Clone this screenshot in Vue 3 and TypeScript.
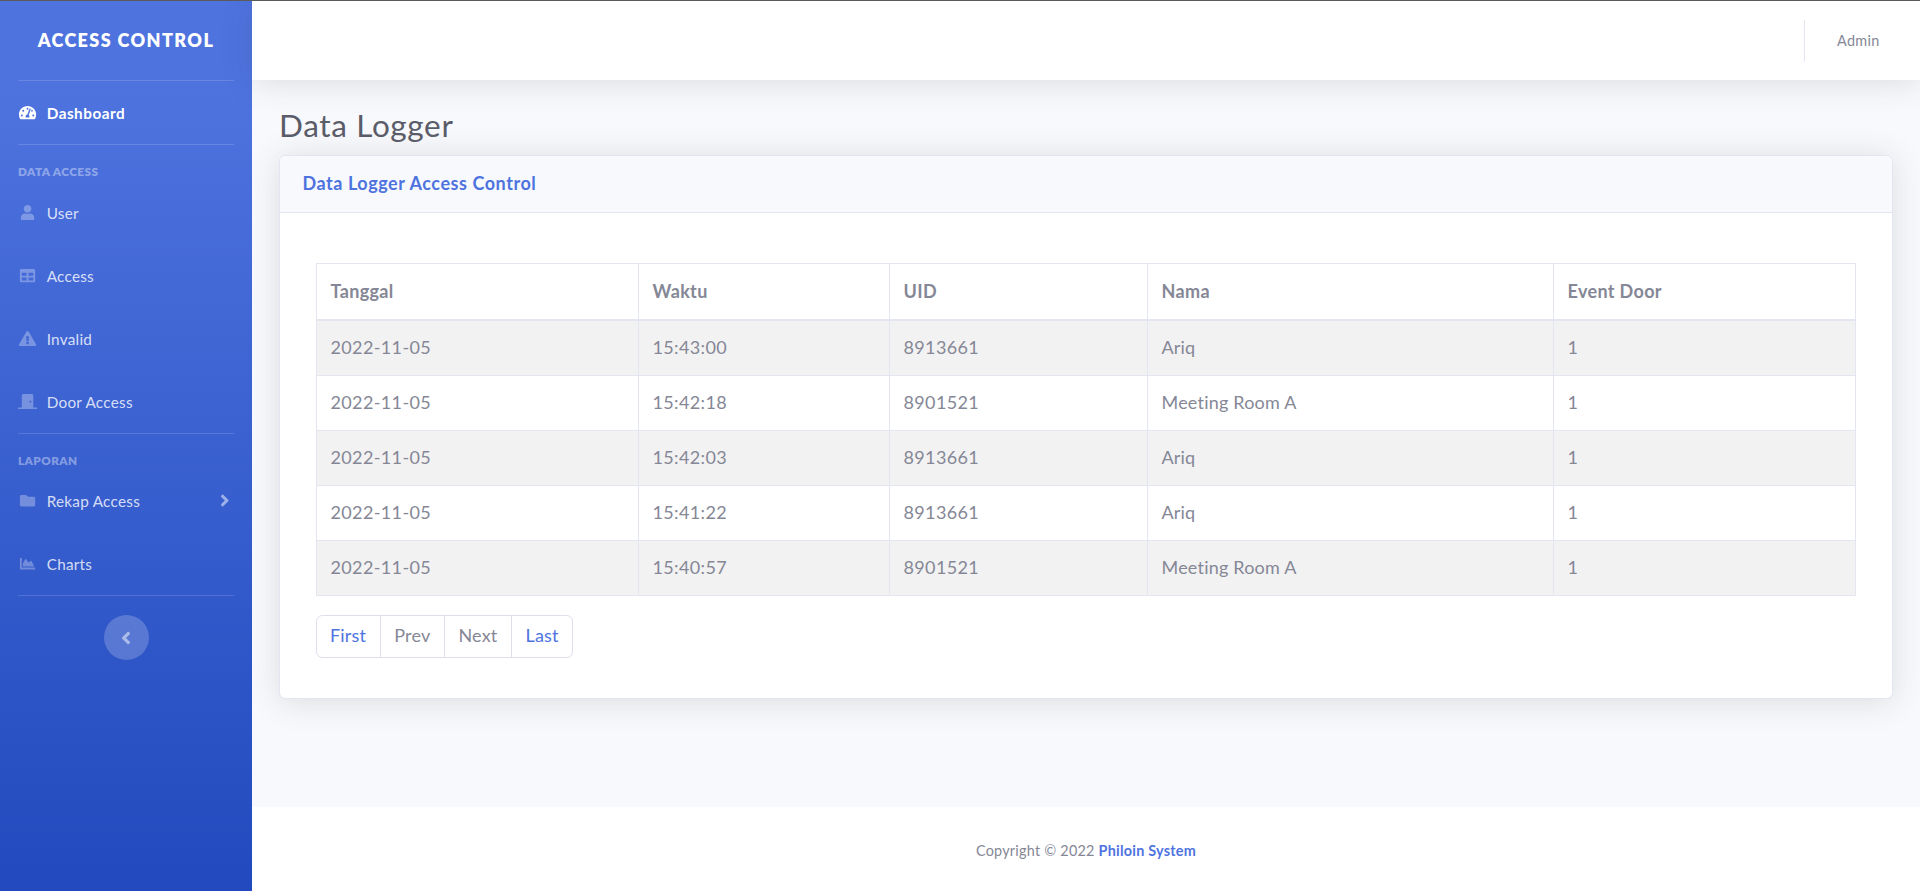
<script setup lang="ts">
interface NavItem {
  label: string;
  icon: keyof typeof icons;
  active?: boolean;
  arrow?: boolean;
}

const icons = {
  gauge: {
    box: '0 0 576 512',
    d: 'M288 32C128.94 32 0 160.94 0 320c0 52.8 14.25 102.26 39.06 144.8 5.61 9.62 16.3 15.2 27.44 15.2h443c11.14 0 21.83-5.58 27.44-15.2C561.75 422.26 576 372.8 576 320c0-159.06-128.94-288-288-288zm0 64c14.71 0 26.58 10.13 30.32 23.65-1.11 2.26-2.64 4.23-3.45 6.67l-9.22 27.67c-5.13 3.49-10.97 6.01-17.64 6.01-17.67 0-32-14.33-32-32S270.33 96 288 96zM96 384c-17.67 0-32-14.33-32-32s14.33-32 32-32 32 14.33 32 32-14.33 32-32 32zm48-160c-17.67 0-32-14.33-32-32s14.33-32 32-32 32 14.33 32 32-14.33 32-32 32zm246.77-72.41l-61.33 184C343.13 347.33 352 364.54 352 384c0 11.72-3.38 22.55-8.88 32H232.88c-5.5-9.45-8.88-20.28-8.88-32 0-33.94 26.5-61.43 59.9-63.59l61.34-184.01c4.17-12.56 17.73-19.45 30.36-15.17 12.57 4.19 19.35 17.79 15.17 30.36zm14.66 57.2l15.52-46.55c3.47-1.29 7.13-2.23 11.05-2.23 17.67 0 32 14.33 32 32s-14.33 32-32 32c-11.38-.01-20.89-6.28-26.57-15.22zM480 384c-17.67 0-32-14.33-32-32s14.33-32 32-32 32 14.33 32 32-14.33 32-32 32z',
  },
  user: {
    box: '0 0 448 512',
    d: 'M224 256c70.7 0 128-57.3 128-128S294.7 0 224 0 96 57.3 96 128s57.3 128 128 128zm89.6 32h-16.7c-22.2 10.2-46.9 16-72.9 16s-50.6-5.8-72.9-16h-16.7C60.2 288 0 348.2 0 422.4V464c0 26.5 21.5 48 48 48h352c26.5 0 48-21.5 48-48v-41.6c0-74.2-60.2-134.4-134.4-134.4z',
  },
  table: {
    box: '0 0 512 512',
    d: 'M464 32H48C21.49 32 0 53.49 0 80v352c0 26.51 21.49 48 48 48h416c26.51 0 48-21.49 48-48V80c0-26.51-21.49-48-48-48zM224 416H64v-96h160v96zm0-160H64v-96h160v96zm224 160H288v-96h160v96zm0-160H288v-96h160v96z',
  },
  warning: {
    box: '0 0 576 512',
    d: 'M569.517 440.013C587.975 472.007 564.806 512 527.94 512H48.054c-36.937 0-59.999-40.055-41.577-71.987L246.423 24.035c18.467-32.009 64.72-31.951 83.154 0l239.94 415.978zM288 354c-25.405 0-46 20.595-46 46s20.595 46 46 46 46-20.595 46-46-20.595-46-46-46zm-43.673-165.346l7.418 136c.347 6.364 5.609 11.346 11.982 11.346h48.546c6.373 0 11.635-4.982 11.982-11.346l7.418-136c.375-6.874-5.098-12.654-11.982-12.654h-63.383c-6.884 0-12.356 5.78-11.981 12.654z',
  },
  door: {
    box: '0 0 640 512',
    d: 'M624 448H512V50.8C512 22.78 490.47 0 464 0H175.99c-26.47 0-48 22.78-48 50.8V448H16c-8.84 0-16 7.16-16 16v32c0 8.84 7.16 16 16 16h608c8.84 0 16-7.16 16-16v-32c0-8.84-7.16-16-16-16zM415.99 288c-17.67 0-32-14.33-32-32s14.33-32 32-32 32 14.33 32 32c.01 17.67-14.32 32-32 32z',
  },
  folder: {
    box: '0 0 512 512',
    d: 'M464 128H272l-64-64H48C21.49 64 0 85.49 0 112v288c0 26.51 21.49 48 48 48h416c26.51 0 48-21.49 48-48V176c0-26.51-21.49-48-48-48z',
  },
  chart: {
    box: '0 0 512 512',
    d: 'M500 384c6.6 0 12 5.4 12 12v40c0 6.6-5.4 12-12 12H12c-6.6 0-12-5.4-12-12V76c0-6.6 5.4-12 12-12h40c6.6 0 12 5.4 12 12v308h436zM372.7 159.5L288 216l-85.3-113.7c-5.1-6.8-15.5-6.3-19.9 1L96 248v104h384l-89.9-187.8c-3.2-6.5-11.4-8.7-17.4-4.7z',
  },
};

const dataNav: NavItem[] = [
  { label: 'User', icon: 'user' },
  { label: 'Access', icon: 'table' },
  { label: 'Invalid', icon: 'warning' },
  { label: 'Door Access', icon: 'door' },
];

const reportNav: NavItem[] = [
  { label: 'Rekap Access', icon: 'folder', arrow: true },
  { label: 'Charts', icon: 'chart' },
];

const columns = ['Tanggal', 'Waktu', 'UID', 'Nama', 'Event Door'];

const rows = [
  ['2022-11-05', '15:43:00', '8913661', 'Ariq', '1'],
  ['2022-11-05', '15:42:18', '8901521', 'Meeting Room A', '1'],
  ['2022-11-05', '15:42:03', '8913661', 'Ariq', '1'],
  ['2022-11-05', '15:41:22', '8913661', 'Ariq', '1'],
  ['2022-11-05', '15:40:57', '8901521', 'Meeting Room A', '1'],
];

const pages = [
  { label: 'First', off: false },
  { label: 'Prev', off: true },
  { label: 'Next', off: true },
  { label: 'Last', off: false },
];
</script>

<template>
  <div class="wrapper">
    <aside class="sidebar">
      <div class="brand">Access Control</div>
      <hr class="divider" />
      <a class="nav-link active">
        <svg class="icon" :viewBox="icons.gauge.box"><path :d="icons.gauge.d" /></svg>
        <span>Dashboard</span>
      </a>
      <hr class="divider" />
      <div class="heading">Data Access</div>
      <a v-for="item in dataNav" :key="item.label" class="nav-link">
        <svg class="icon" :viewBox="icons[item.icon].box"><path :d="icons[item.icon].d" /></svg>
        <span>{{ item.label }}</span>
      </a>
      <hr class="divider" />
      <div class="heading tight">Laporan</div>
      <a v-for="item in reportNav" :key="item.label" class="nav-link">
        <svg class="icon" :viewBox="icons[item.icon].box"><path :d="icons[item.icon].d" /></svg>
        <span>{{ item.label }}</span>
        <svg v-if="item.arrow" class="arrow" viewBox="0 0 256 512">
          <path d="M224.3 273l-136 136c-9.4 9.4-24.6 9.4-33.9 0l-22.6-22.6c-9.4-9.4-9.4-24.6 0-33.9l96.4-96.4-96.4-96.4c-9.4-9.4-9.4-24.6 0-33.9L54.3 103c9.4-9.4 24.6-9.4 33.9 0l136 136c9.5 9.4 9.5 24.6.1 34z" />
        </svg>
      </a>
      <hr class="divider" />
      <button class="toggle" type="button">
        <svg viewBox="0 0 256 512">
          <path d="M31.7 239l136-136c9.4-9.4 24.6-9.4 33.9 0l22.6 22.6c9.4 9.4 9.4 24.6 0 33.9L127.9 256l96.4 96.4c9.4 9.4 9.4 24.6 0 33.9L201.7 409c-9.4 9.4-24.6 9.4-33.9 0l-136-136c-9.5-9.4-9.5-24.6-.1-34z" />
        </svg>
      </button>
    </aside>

    <div class="main">
      <header class="topbar">
        <div class="topbar-sep"></div>
        <span class="admin">Admin</span>
      </header>

      <div class="content">
        <h1>Data Logger</h1>
        <section class="card">
          <div class="card-header">Data Logger Access Control</div>
          <div class="card-body">
            <table>
              <thead>
                <tr>
                  <th v-for="col in columns" :key="col">{{ col }}</th>
                </tr>
              </thead>
              <tbody>
                <tr v-for="(row, i) in rows" :key="i">
                  <td v-for="(cell, j) in row" :key="j">{{ cell }}</td>
                </tr>
              </tbody>
            </table>
            <ul class="pagination">
              <li v-for="p in pages" :key="p.label" :class="{ off: p.off }">{{ p.label }}</li>
            </ul>
          </div>
        </section>
      </div>

      <footer class="footer">
        <span>Copyright © 2022 <b>Philoin System</b></span>
      </footer>
    </div>
  </div>
</template>

<style scoped>
.wrapper {
  display: flex;
  height: 891px;
  border-top: 1px solid #5a5a5a;
  box-sizing: border-box;
  overflow: hidden;
  background: #f8f9fc;
  color: #858796;
  font-family: Lato, 'Noto Sans', sans-serif;
  font-size: 18px;
}
.sidebar {
  width: 252px;
  flex: none;
  display: flex;
  flex-direction: column;
  background: linear-gradient(180deg, #4e73df 10%, #224abe 100%);
}
.brand {
  height: 79px;
  padding-bottom: 2px;
  box-sizing: border-box;
  display: flex;
  align-items: center;
  justify-content: center;
  font-size: 18px;
  font-weight: 800;
  letter-spacing: 1.4px;
  text-transform: uppercase;
  color: #fff;
}
.divider {
  margin: 0 18px;
  border: 0;
  border-top: 1px solid rgba(255, 255, 255, 0.15);
}
.nav-link {
  display: flex;
  align-items: center;
  height: 63px;
  padding: 0 18px;
  box-sizing: border-box;
  font-size: 15.3px;
  letter-spacing: 0.25px;
  color: rgba(255, 255, 255, 0.8);
}
.nav-link.active {
  color: #fff;
  font-weight: 700;
  letter-spacing: 0.5px;
}
.icon {
  width: 19.1px;
  height: 15.3px;
  flex: none;
  margin-right: 9.6px;
  fill: rgba(255, 255, 255, 0.3);
}
.active .icon {
  fill: #fff;
}
.arrow {
  width: 9.5px;
  height: 19px;
  margin-left: auto;
  margin-right: 4.5px;
  fill: rgba(255, 255, 255, 0.5);
}
.heading {
  padding: 17px 18px 1px;
  font-size: 11.7px;
  line-height: 18px;
  font-weight: 800;
  letter-spacing: 0.45px;
  text-transform: uppercase;
  color: rgba(255, 255, 255, 0.4);
}
.heading.tight {
  padding-bottom: 0;
}
.toggle {
  width: 45px;
  height: 45px;
  margin: 19px auto 0;
  padding: 0;
  border: 0;
  border-radius: 50%;
  display: flex;
  align-items: center;
  justify-content: center;
  background: rgba(255, 255, 255, 0.2);
}
.toggle svg {
  width: 10px;
  height: 20px;
  fill: rgba(255, 255, 255, 0.5);
}
.main {
  flex: 1;
  min-width: 0;
  display: flex;
  flex-direction: column;
}
.topbar {
  height: 79px;
  flex: none;
  display: flex;
  align-items: center;
  justify-content: flex-end;
  background: #fff;
  box-shadow: 0 2.7px 31.5px rgba(58, 59, 69, 0.15);
}
.topbar-sep {
  width: 1px;
  height: 42px;
  background: #e3e6f0;
}
.admin {
  width: 115px;
  padding-left: 32px;
  box-sizing: border-box;
  font-size: 14.4px;
  letter-spacing: 0.3px;
}
.content {
  padding: 26px 27px 0;
}
h1 {
  margin: 0 0 11px;
  font-size: 31.5px;
  line-height: 38px;
  font-weight: 400;
  letter-spacing: 0.65px;
  color: #5a5c69;
}
.card {
  background: #fff;
  border: 1px solid #e3e6f0;
  border-radius: 6.3px;
  box-shadow: 0 2.7px 31.5px rgba(58, 59, 69, 0.15);
  overflow: hidden;
}
.card-header {
  height: 57px;
  display: flex;
  align-items: center;
  padding: 0 22.5px 2px;
  box-sizing: border-box;
  background: #f8f9fc;
  border-bottom: 1px solid #e3e6f0;
  font-weight: 700;
  letter-spacing: 0.55px;
  color: #4e73df;
}
.card-body {
  padding: 50px 36.5px 40px 35.5px;
}
table {
  width: 100%;
  table-layout: fixed;
  border-collapse: collapse;
  line-height: 27px;
}
th,
td {
  box-sizing: border-box;
  padding: 13px 14px 14px;
  text-align: left;
  border: 1px solid #e3e6f0;
}
td {
  letter-spacing: 0.2px;
}
td:nth-child(-n + 3) {
  letter-spacing: 0.37px;
}
th {
  padding-top: 14px;
  padding-bottom: 14px;
  font-weight: 700;
  letter-spacing: 0.35px;
  border-bottom-width: 2px;
}
th:nth-child(1) {
  width: 322px;
}
th:nth-child(2) {
  width: 251px;
}
th:nth-child(3) {
  width: 258px;
}
th:nth-child(4) {
  width: 406px;
}
tbody tr:nth-child(odd) {
  background: rgba(0, 0, 0, 0.05);
}
.pagination {
  display: inline-flex;
  margin: 19px 0 0;
  padding: 0;
  list-style: none;
  border: 1px solid #dddfeb;
  border-radius: 6.3px;
  line-height: 41px;
  letter-spacing: 0.2px;
  color: #4e73df;
}
.pagination li {
  padding: 0 13.5px 1px;
  height: 41px;
  line-height: 39px;
  box-sizing: border-box;
}
.pagination li + li {
  border-left: 1px solid #dddfeb;
}
.pagination .off {
  color: #858796;
}
.footer {
  margin-top: auto;
  height: 84px;
  padding-top: 2px;
  box-sizing: border-box;
  flex: none;
  display: flex;
  align-items: center;
  justify-content: center;
  background: #fff;
  font-size: 14.4px;
  letter-spacing: 0.24px;
}
.footer b {
  color: #4e73df;
  font-weight: 700;
}
</style>
